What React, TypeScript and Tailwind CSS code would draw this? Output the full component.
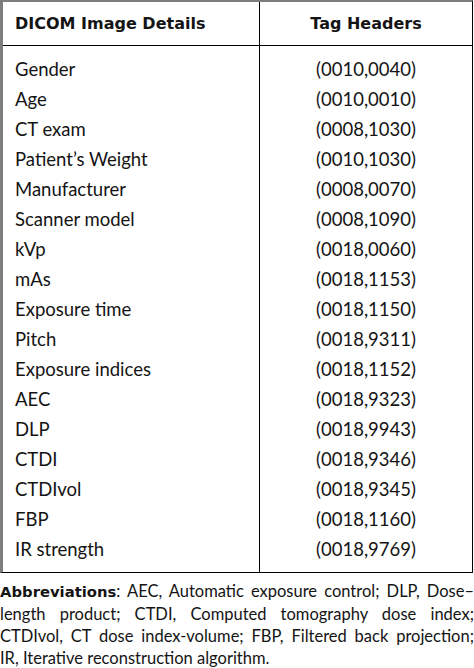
const rows: [string, string][] = [
  ["Gender", "(0010,0040)"],
  ["Age", "(0010,0010)"],
  ["CT exam", "(0008,1030)"],
  ["Patient’s Weight", "(0010,1030)"],
  ["Manufacturer", "(0008,0070)"],
  ["Scanner model", "(0008,1090)"],
  ["kVp", "(0018,0060)"],
  ["mAs", "(0018,1153)"],
  ["Exposure time", "(0018,1150)"],
  ["Pitch", "(0018,9311)"],
  ["Exposure indices", "(0018,1152)"],
  ["AEC", "(0018,9323)"],
  ["DLP", "(0018,9943)"],
  ["CTDI", "(0018,9346)"],
  ["CTDIvol", "(0018,9345)"],
  ["FBP", "(0018,1160)"],
  ["IR strength", "(0018,9769)"],
];

export default function App() {
  return (
    <div className="w-[474px] h-[668px] overflow-hidden bg-white text-[#141414] font-['Lato','Open_Sans',sans-serif]">
      <div className="w-[473px] border-l-[3px] border-t-2 border-r border-b border-l-[#7d7d7d] border-t-[#7d7d7d] border-r-black border-b-black">
        <div className="grid grid-cols-[257px_1fr] h-[44px] border-b border-black text-[16px] font-bold font-['DejaVu_Sans',sans-serif]">
          <div className="flex items-center pl-3 border-r border-black">DICOM Image Details</div>
          <div className="flex items-center justify-center">Tag Headers</div>
        </div>
        <div className="grid grid-cols-[257px_1fr] text-[18.5px]">
          <div className="pt-[9px] pb-[7px] pl-3 border-r border-black">
            {rows.map(([name]) => (
              <div key={name} className="h-[30px] flex items-center">
                {name}
              </div>
            ))}
          </div>
          <div className="pt-[9px] pb-[7px]">
            {rows.map(([name, tag]) => (
              <div key={name} className="h-[30px] flex items-center justify-center">
                {tag}
              </div>
            ))}
          </div>
        </div>
      </div>
      <div className="mt-[7px] text-[16.5px] leading-[22px]">
        <div className="text-justify [text-align-last:justify]">
          <span className="font-bold font-['DejaVu_Sans',sans-serif] text-[14.8px]">Abbreviations</span>: AEC, Automatic exposure control; DLP, Dose–
        </div>
        <div className="text-justify [text-align-last:justify]">
          length product; CTDI, Computed tomography dose index;
        </div>
        <div className="text-justify [text-align-last:justify]">
          CTDIvol, CT dose index-volume; FBP, Filtered back projection;
        </div>
        <div>IR, Iterative reconstruction algorithm.</div>
      </div>
    </div>
  );
}
